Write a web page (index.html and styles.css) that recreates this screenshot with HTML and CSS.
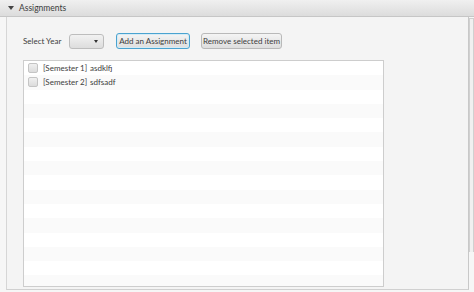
FILE: index.html
```html
<!DOCTYPE html>
<html lang="en">
<head>
    <meta charset="UTF-8">
    <meta name="viewport" content="width=device-width, initial-scale=1.0">
    <title>Assignments</title>
    <link rel="stylesheet" href="styles.css">
</head>
<body>
    <div class="pane">
        <div class="titlebar">
            <span class="arrow"></span>
            <span class="title">Assignments</span>
        </div>
        <div class="body">
            <div class="content">
                <div class="toolbar">
                    <span class="label">Select Year</span>
                    <div class="combo"><span class="combo-arrow"></span></div>
                    <button class="btn focused">Add an Assignment</button>
                    <button class="btn remove">Remove selected item</button>
                </div>
                <div class="list">
                    <div class="row">
                        <span class="check"></span>
                        <span class="sem">[Semester 1]</span>
                        <span class="name">asdklfj</span>
                    </div>
                    <div class="row">
                        <span class="check"></span>
                        <span class="sem">[Semester 2]</span>
                        <span class="name">sdfsadf</span>
                    </div>
                    <div class="row"></div>
                    <div class="row"></div>
                    <div class="row"></div>
                    <div class="row"></div>
                    <div class="row"></div>
                    <div class="row"></div>
                    <div class="row"></div>
                    <div class="row"></div>
                    <div class="row"></div>
                    <div class="row"></div>
                    <div class="row"></div>
                    <div class="row"></div>
                    <div class="row"></div>
                    <div class="row"></div>
                </div>
            </div>
            <div class="scroll"></div>
        </div>
    </div>
</body>
</html>
```
FILE: styles.css
```css
*{
    margin: 0;
    padding: 0;
    box-sizing: border-box;
}

body{
    width: 474px;
    height: 292px;
    overflow: hidden;
    background: #f6f6f6;
    font-family: Lato, "Liberation Sans", sans-serif;
    font-size: 8px;
    color: #3c3c3c;
    white-space: nowrap;
}

.titlebar{
    height: 17px;
    display: flex;
    align-items: center;
    padding-left: 8px;
    background: linear-gradient(#f0f0f0, #dcdcdc);
    border-bottom: 1px solid #c6c6c6;
}

.arrow{
    width: 0;
    height: 0;
    border-left: 3px solid transparent;
    border-right: 3px solid transparent;
    border-top: 4px solid #444;
    margin-right: 5px;
}

.title{
    color: #3c3c3c;
    font-size: 8.5px;
}

.body{
    display: flex;
    height: 273px;
}

.content{
    width: 463px;
    margin-left: 6px;
    border-left: 1px solid #d6d6d6;
    border-right: 1px solid #c8c8c8;
    border-bottom: 1px solid #d0d0d0;
    background: #f4f4f4;
    padding: 16px 0 0 16px;
}

.scroll{
    width: 5px;
    height: 234px;
    margin-top: 1px;
    border-left: 1px solid #d0d0d0;
    border-right: 1px solid #d0d0d0;
    border-top: 1px solid #d0d0d0;
    background: #f0f0f0;
}

.toolbar{
    display: flex;
    align-items: center;
    height: 16px;
}

.label{
    width: 46px;
}

.combo{
    width: 35px;
    height: 15px;
    border: 1px solid #bdbdbd;
    border-radius: 3px;
    background: linear-gradient(#f2f2f2, #dddddd);
    display: flex;
    justify-content: flex-end;
    align-items: center;
    padding-right: 5px;
}

.combo-arrow{
    width: 0;
    height: 0;
    border-left: 2.5px solid transparent;
    border-right: 2.5px solid transparent;
    border-top: 3px solid #333;
}

.btn{
    height: 16px;
    font-family: inherit;
    font-size: 8px;
    color: #3c3c3c;
    border: 1px solid #b9b9b9;
    border-radius: 3px;
    background: linear-gradient(#f4f4f4, #dedede);
    text-align: center;
    white-space: nowrap;
}

.focused{
    width: 74px;
    margin-left: 12px;
    border: 1px solid #4aa3d0;
    box-shadow: inset 0 0 0 1px #d6ebf5;
}

.remove{
    width: 81px;
    margin-left: 11px;
}

.list{
    width: 361px;
    height: 227px;
    margin-top: 11px;
    border: 1px solid #cdcdcd;
    background: #fff;
    overflow: hidden;
}

.row{
    height: 14.3px;
    display: flex;
    align-items: center;
    padding-left: 4px;
}

.row:nth-child(even){
    background: #fafafa;
}

.check{
    width: 10px;
    height: 10px;
    border: 1px solid #c4c4c4;
    border-radius: 2px;
    background: linear-gradient(#f0f0f0, #dcdcdc);
    margin-right: 5px;
}

.sem{
    width: 47px;
}
```
